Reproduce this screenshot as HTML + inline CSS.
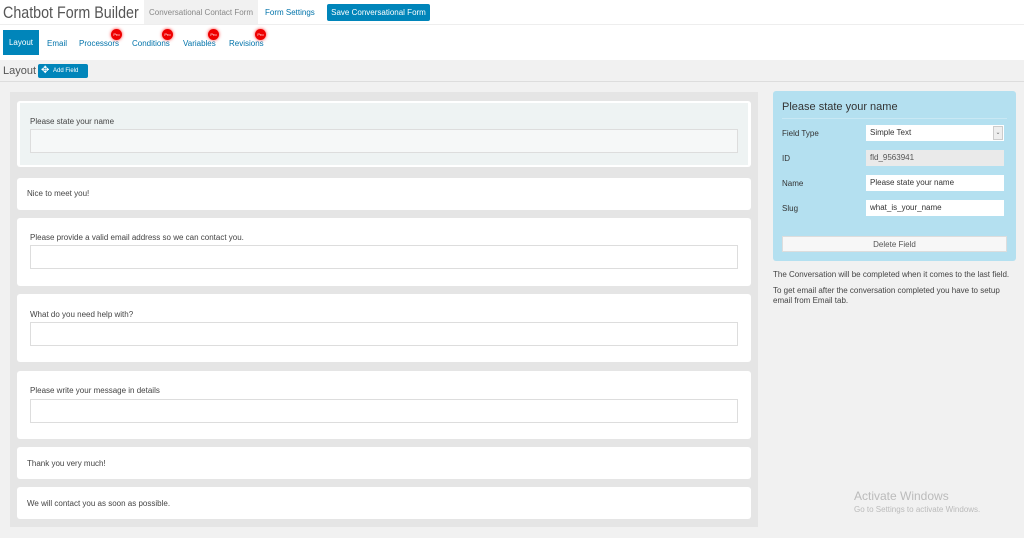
<!DOCTYPE html>
<html><head><meta charset="utf-8"><style>
*{box-sizing:border-box;margin:0;padding:0}
body{width:1024px;height:538px;background:#f1f1f1;font-family:"Liberation Sans",sans-serif;position:relative;overflow:hidden;color:#444}
.a{position:absolute}
.t{font-size:8px;color:#444;white-space:nowrap}
.blue{color:#0073aa}
.card{position:absolute;left:17px;width:734px;background:#fff;border-radius:3px}
.inp{position:absolute;left:13px;width:708px;height:24px;border:1px solid #ddd;background:#fff}
.pro{position:absolute;width:11px;height:11px;border-radius:50%;background:#e00;color:#fff;font-size:4px;text-align:center;line-height:11px;box-shadow:0 0 3px #f33}
.rl{position:absolute;left:782px;font-size:8px;color:#333}
.ri{position:absolute;left:866px;width:138px;height:16px;background:#fff;font-size:8px;color:#333;padding-left:4px;line-height:16px}
</style></head><body>
<div class="a" style="left:0;top:0;width:1024px;height:24px;background:#fff"></div>
<div class="a" style="left:3px;top:3px;font-size:17px;color:#555;white-space:nowrap;transform:scaleX(0.84);transform-origin:0 0">Chatbot Form Builder</div>
<div class="a t" style="left:144px;top:0;width:114px;height:24px;background:#f1f1f1;color:#888;text-align:center;line-height:25px">Conversational Contact Form</div>
<div class="a t blue" style="left:265px;top:8px">Form Settings</div>
<div class="a t" style="left:327px;top:4px;width:103px;height:17px;background:#0085ba;color:#fff;border-radius:2px;text-align:center;line-height:17px">Save Conversational Form</div>
<div class="a" style="left:0;top:24px;width:1024px;height:36px;background:#fff;border-top:1px solid #eee"></div>
<div class="a t" style="left:3px;top:30px;width:36px;height:25px;background:#0085ba;color:#fff;text-align:center;line-height:26px">Layout</div>
<div class="a t blue" style="left:47px;top:39px">Email</div>
<div class="a t blue" style="left:79px;top:39px">Processors</div>
<div class="a t blue" style="left:132px;top:39px">Conditions</div>
<div class="a t blue" style="left:183px;top:39px">Variables</div>
<div class="a t blue" style="left:229px;top:39px">Revisions</div>
<div class="pro" style="left:111px;top:29px">Pro</div>
<div class="pro" style="left:162px;top:29px">Pro</div>
<div class="pro" style="left:208px;top:29px">Pro</div>
<div class="pro" style="left:255px;top:29px">Pro</div>
<div class="a" style="left:0;top:81px;width:1024px;height:1px;background:#ddd"></div>
<div class="a" style="left:3px;top:65px;font-size:11px;color:#555">Layout</div>
<div class="a" style="left:38px;top:64px;width:50px;height:14px;background:#0085ba;border-radius:2px"></div>
<div class="a" style="left:53px;top:64px;font-size:6px;line-height:14px;color:#fff;white-space:nowrap">Add Field</div>
<div class="a" style="left:41px;top:66px;color:#fff;font-size:10px;line-height:10px">✥</div>
<div class="a" style="left:10px;top:92px;width:748px;height:435px;background:#e5e5e5"></div>
<div class="card" style="top:101px;height:66px;padding:2px 3px"><div style="background:#eef3f3;height:62px"></div>
 <div class="a t" style="left:13px;top:16px">Please state your name</div><div class="inp" style="top:28px;background:#f6f8f8"></div></div>
<div class="card" style="top:178px;height:32px"><div class="a t" style="left:10px;top:11px">Nice to meet you!</div></div>
<div class="card" style="top:218px;height:68px"><div class="a t" style="left:13px;top:15px">Please provide a valid email address so we can contact you.</div><div class="inp" style="top:27px"></div></div>
<div class="card" style="top:294px;height:68px"><div class="a t" style="left:13px;top:16px">What do you need help with?</div><div class="inp" style="top:28px"></div></div>
<div class="card" style="top:371px;height:68px"><div class="a t" style="left:13px;top:15px">Please write your message in details</div><div class="inp" style="top:28px"></div></div>
<div class="card" style="top:447px;height:32px"><div class="a t" style="left:10px;top:12px">Thank you very much!</div></div>
<div class="card" style="top:487px;height:32px"><div class="a t" style="left:10px;top:12px">We will contact you as soon as possible.</div></div>
<div class="a" style="left:773px;top:91px;width:243px;height:170px;background:#b4e0f0;border-radius:3px"></div>
<div class="a" style="left:782px;top:101px;font-size:11px;color:#333">Please state your name</div>
<div class="a" style="left:782px;top:118px;width:225px;height:1px;background:#c9e8f4"></div>
<div class="rl" style="top:129px">Field Type</div><div class="ri" style="top:125px">Simple Text</div>
<div class="a" style="left:993px;top:126px;width:10px;height:14px;background:#eee;border:1px solid #ccc;font-size:6px;text-align:center;line-height:12px;color:#666">⌄</div>
<div class="rl" style="top:154px">ID</div><div class="ri" style="top:150px;background:#eaeaea;color:#555">fld_9563941</div>
<div class="rl" style="top:179px">Name</div><div class="ri" style="top:175px">Please state your name</div>
<div class="rl" style="top:204px">Slug</div><div class="ri" style="top:200px">what_is_your_name</div>
<div class="a t" style="left:782px;top:236px;width:225px;height:16px;background:#f7f7f7;border:1px solid #ddd;text-align:center;line-height:15px;color:#555">Delete Field</div>
<div class="a t" style="left:773px;top:270px">The Conversation will be completed when it comes to the last field.</div>
<div class="a t" style="left:773px;top:286px">To get email after the conversation completed you have to setup</div>
<div class="a t" style="left:773px;top:296px">email from Email tab.</div>
<div class="a" style="left:854px;top:489px;font-size:12px;color:#bbb">Activate Windows</div>
<div class="a" style="left:854px;top:505px;font-size:8px;color:#bbb">Go to Settings to activate Windows.</div>
</body></html>
